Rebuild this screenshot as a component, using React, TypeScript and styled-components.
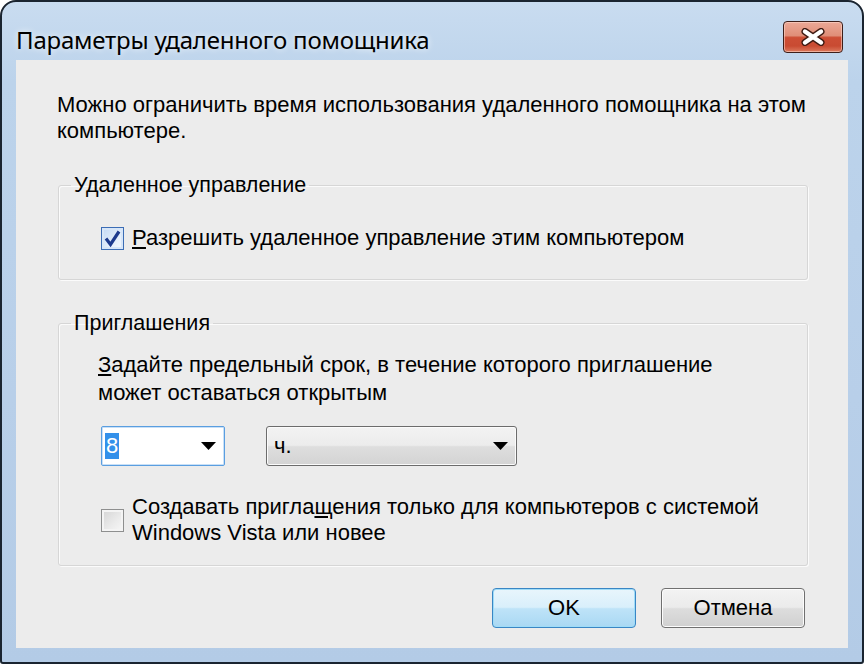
import { ReactNode } from "react";
import styled, { createGlobalStyle } from "styled-components";

const GlobalStyle = createGlobalStyle`
  html, body {
    margin: 0;
    padding: 0;
    background: #ffffff;
  }
  * {
    box-sizing: border-box;
  }
`;

export default function App() {
  return (
    <>
      <GlobalStyle />
      <Window>
        <TitleBar>
          <Title>Параметры удаленного помощника</Title>
          <CloseButton aria-label="Закрыть">
            <CloseGlyph />
          </CloseButton>
        </TitleBar>
        <Client>
          <Intro>
            Можно ограничить время использования удаленного помощника на этом
            компьютере.
          </Intro>

          <Group $pb={28}>
            <Legend>Удаленное управление</Legend>
            <CheckRow $mt={27}>
              <CheckBox checked />
              <CheckLabel>
                <u>Р</u>азрешить удаленное управление этим компьютером
              </CheckLabel>
            </CheckRow>
          </Group>

          <Group $mt={30} $pb={19}>
            <Legend>Приглашения</Legend>
            <Hint>
              <u>З</u>адайте предельный срок, в течение которого приглашение
              <br />
              может оставаться открытым
            </Hint>
            <ComboRow>
              <EditCombo>
                <Selected>8</Selected>
                <Arrow />
              </EditCombo>
              <DropCombo>
                <span>ч.</span>
                <Arrow />
              </DropCombo>
            </ComboRow>
            <CheckRow $mt={28} $top>
              <CheckBox />
              <CheckLabel>
                Создавать пригла<u>щ</u>ения только для компьютеров с системой
                <br />
                Windows Vista или новее
              </CheckLabel>
            </CheckRow>
          </Group>

          <Buttons>
            <Button $primary>OK</Button>
            <Button>Отмена</Button>
          </Buttons>
        </Client>
      </Window>
    </>
  );
}

function CheckBox({ checked }: { checked?: boolean }) {
  return (
    <Box $checked={checked}>
      {checked ? (
        <svg width="19" height="19" viewBox="0 0 19 19">
          <path
            d="M3 9.5 L7.5 15.5 L16 2.5"
            fill="none"
            stroke="#1c3a8e"
            strokeWidth="3.2"
            strokeLinejoin="miter"
          />
        </svg>
      ) : null}
    </Box>
  );
}

function Arrow() {
  return (
    <svg width="15" height="8" viewBox="0 0 15 8">
      <path d="M0 0 H15 L7.5 8 Z" fill="#000" />
    </svg>
  );
}

function CloseGlyph() {
  return (
    <svg width="26" height="18" viewBox="0 0 26 18">
      <path
        d="M5 3.5 L21 14.5 M21 3.5 L5 14.5"
        stroke="#3e1a12"
        strokeWidth="7"
        strokeLinecap="round"
      />
      <path
        d="M5 3.5 L21 14.5 M21 3.5 L5 14.5"
        stroke="#ffffff"
        strokeWidth="4.4"
        strokeLinecap="round"
      />
    </svg>
  );
}

function Legend({ children }: { children: ReactNode }) {
  return <LegendText>{children}</LegendText>;
}

const Window = styled.div`
  width: 864px;
  height: 664px;
  display: flex;
  flex-direction: column;
  border: 2px solid #1a2430;
  border-radius: 16px 16px 3px 3px;
  padding: 0 14px 14px 14px;
  background: linear-gradient(
    to bottom,
    #c9dcf0 0%,
    #bcd3eb 12%,
    #b8cfe9 60%,
    #b3cbe6 100%
  );
  font-family: "Liberation Sans", Arial, sans-serif;
  color: #000;
`;

const TitleBar = styled.div`
  height: 58px;
  flex: none;
  display: flex;
  align-items: center;
  justify-content: space-between;
  padding-top: 12px;
`;

const Title = styled.div`
  font-family: "Noto Sans", "Open Sans", sans-serif;
  font-size: 24px;
  padding-top: 4px;
  color: #000;
  text-shadow: 0 0 6px rgba(255, 255, 255, 0.9);
  letter-spacing: -0.2px;
`;

const CloseButton = styled.div`
  width: 60px;
  height: 32px;
  margin-right: 5px;
  display: flex;
  align-items: center;
  justify-content: center;
  border: 1px solid #3d1f1a;
  border-radius: 4px;
  background: linear-gradient(
    to bottom,
    #eba896 0%,
    #e08e78 45%,
    #cd4e35 52%,
    #c94b32 80%,
    #dc7a5e 100%
  );
  box-shadow: inset 0 0 0 1px rgba(255, 220, 210, 0.55);
`;

const Client = styled.div`
  flex: 1;
  background: #ececec;
  padding: 32px 40px 0 41px;
  display: flex;
  flex-direction: column;
`;

const Intro = styled.p`
  margin: 0;
  font-size: 22px;
  line-height: 26px;
`;

const Group = styled.fieldset<{ $mt?: number; $pb?: number }>`
  margin: ${(p) => p.$mt ?? 28}px 0 0 1px;
  padding: 0 0 ${(p) => p.$pb ?? 20}px 42px;
  border: 1px solid #d6d6d6;
  border-radius: 3px;
  box-shadow: 1px 1px 0 #fbfbfb, inset 1px 1px 0 #fbfbfb;
  min-width: 0;
`;

const LegendText = styled.legend`
  margin-left: -30px;
  padding: 0 3px;
  font-size: 21.5px;
  line-height: 26px;
`;

const CheckRow = styled.div<{ $mt?: number; $top?: boolean }>`
  margin-top: ${(p) => p.$mt ?? 0}px;
  display: flex;
  align-items: ${(p) => (p.$top ? "flex-start" : "center")};
  gap: 8px;
  & > :first-child {
    margin-top: ${(p) => (p.$top ? "15px" : "0")};
  }
`;

const Box = styled.div<{ $checked?: boolean }>`
  width: 23px;
  height: 23px;
  flex: none;
  display: flex;
  align-items: center;
  justify-content: center;
  border: 1px solid ${(p) => (p.$checked ? "#3c6db5" : "#8e8f8f")};
  background: ${(p) =>
    p.$checked
      ? "linear-gradient(135deg, #c2d8f4 0%, #e3eefb 60%, #f6f9fe 100%)"
      : "linear-gradient(135deg, #d4d4d4 0%, #ebebeb 60%, #f7f7f7 100%)"};
  box-shadow: inset 0 0 0 2px ${(p) => (p.$checked ? "#d7e6f8" : "#f4f4f4")};
`;

const CheckLabel = styled.div`
  font-size: 22px;
  line-height: 26px;
`;

const Hint = styled.p`
  margin: 15px 0 0 -3px;
  font-size: 22px;
  line-height: 28px;
`;

const ComboRow = styled.div`
  margin-top: 19px;
  display: flex;
  gap: 41px;
`;

const EditCombo = styled.div`
  width: 124px;
  height: 40px;
  display: flex;
  align-items: center;
  justify-content: space-between;
  padding: 0 8px 0 3px;
  background: #fff;
  border: 1px solid #5a9ee0;
  border-radius: 2px;
  box-shadow: inset 0 0 0 1px #c9e0f7;
  font-size: 22px;
`;

const Selected = styled.span`
  background: #3390ea;
  color: #fff;
  line-height: 26px;
  padding: 0 1px;
`;

const DropCombo = styled.div`
  width: 251px;
  height: 40px;
  display: flex;
  align-items: center;
  justify-content: space-between;
  padding: 0 8px 0 7px;
  border: 1px solid #6c6c6c;
  border-radius: 3px;
  background: linear-gradient(
    to bottom,
    #f3f3f3 0%,
    #ececec 48%,
    #dedede 52%,
    #d3d3d3 100%
  );
  box-shadow: inset 0 0 0 1px #fbfbfb;
  font-size: 22px;
`;

const Buttons = styled.div`
  margin-top: 22px;
  padding-right: 3px;
  display: flex;
  justify-content: flex-end;
  gap: 25px;
`;

const Button = styled.div<{ $primary?: boolean }>`
  width: 144px;
  height: 40px;
  display: flex;
  align-items: center;
  justify-content: center;
  border-radius: 4px;
  font-size: 22px;
  border: 1px solid ${(p) => (p.$primary ? "#3a86c4" : "#707070")};
  background: ${(p) =>
    p.$primary
      ? "linear-gradient(to bottom, #e8f5fc 0%, #d9effb 48%, #bee3f8 52%, #a9d8f3 100%)"
      : "linear-gradient(to bottom, #f3f3f3 0%, #ebebeb 48%, #dddddd 52%, #d0d0d0 100%)"};
  box-shadow: inset 0 0 0 1px ${(p) => (p.$primary ? "#9fdcf8" : "#fcfcfc")};
`;
